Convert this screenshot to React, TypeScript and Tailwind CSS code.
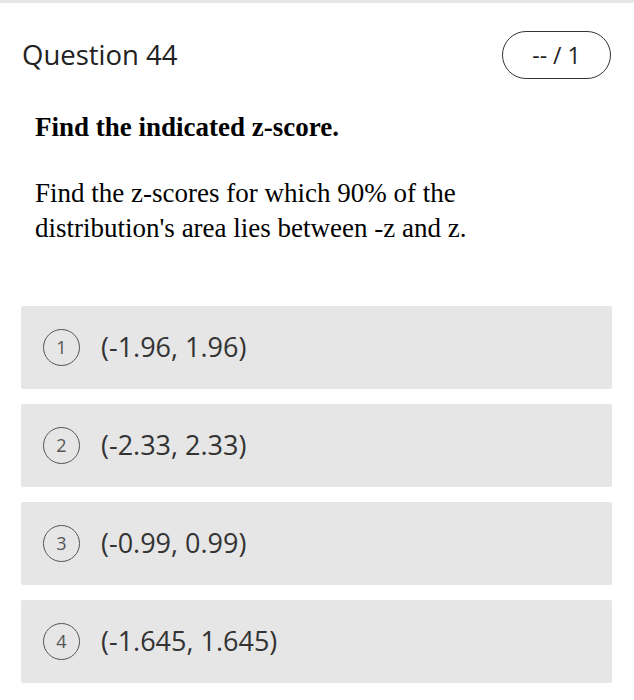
const options = ['(-1.96, 1.96)', '(-2.33, 2.33)', '(-0.99, 0.99)', '(-1.645, 1.645)'];

export default function App() {
  return (
    <main className="min-h-[700px] w-[634px] bg-white font-['Open_Sans',sans-serif] text-[#222]">
      <div className="h-[3px] bg-[#e6e6e6]" />
      <header className="flex items-center justify-between pl-[22px] pr-[23px] pt-[26px]">
        <h1 className="text-[27.5px] leading-[52px]">Question 44</h1>
        <div className="flex h-[48px] w-[109px] items-center justify-center rounded-full border border-[#333] text-[23px]">
          -- / 1
        </div>
      </header>
      <section className="px-[35px] pt-[29px] font-['Liberation_Serif',serif] text-[27px] text-black">
        <p className="font-bold leading-[35px]">Find the indicated z-score.</p>
        <p className="mt-[31px] leading-[35px]">
          Find the z-scores for which 90% of the
          <br />
          distribution's area lies between -z and z.
        </p>
      </section>
      <ul className="mt-[60px] flex flex-col gap-[15px] pl-[21px] pr-[22px]">
        {options.map((opt, i) => (
          <li key={opt} className="flex h-[83px] items-center rounded-[2px] bg-[#e6e6e6] pl-[22px]">
            <span className="flex h-[37px] w-[37px] items-center justify-center rounded-full border-[1.5px] border-[#555] text-[18px] text-[#555]">
              {i + 1}
            </span>
            <span className="ml-[21px] text-[27px] text-[#333]">{opt}</span>
          </li>
        ))}
      </ul>
    </main>
  );
}
